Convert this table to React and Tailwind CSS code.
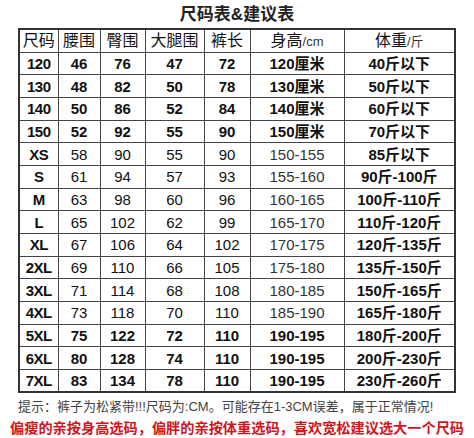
const rows = [
  ["120", "46", "76", "47", "72", "120厘米", "40斤以下", true, true],
  ["130", "48", "82", "50", "78", "130厘米", "50斤以下", true, true],
  ["140", "50", "86", "52", "84", "140厘米", "60斤以下", true, true],
  ["150", "52", "92", "55", "90", "150厘米", "70斤以下", true, true],
  ["XS", "58", "90", "55", "90", "150-155", "85斤以下", false, true],
  ["S", "61", "94", "57", "93", "155-160", "90斤-100斤", false, false],
  ["M", "63", "98", "60", "96", "160-165", "100斤-110斤", false, false],
  ["L", "65", "102", "62", "99", "165-170", "110斤-120斤", false, false],
  ["XL", "67", "106", "64", "102", "170-175", "120斤-135斤", false, false],
  ["2XL", "69", "110", "66", "105", "175-180", "135斤-150斤", false, false],
  ["3XL", "71", "114", "68", "108", "180-185", "150斤-165斤", false, false],
  ["4XL", "73", "118", "70", "110", "185-190", "165斤-180斤", false, false],
  ["5XL", "75", "122", "72", "110", "190-195", "180斤-200斤", true, true],
  ["6XL", "80", "128", "74", "110", "190-195", "200斤-230斤", true, true],
  ["7XL", "83", "134", "78", "110", "190-195", "230斤-260斤", true, true],
];

const widths = ["w-[39px]", "w-[42px]", "w-[45px]", "w-[59px]", "w-[46px]", "w-[94px]", "w-[111px]"];

const font = { fontFamily: '"Liberation Sans", "Noto Sans CJK SC", sans-serif' };

export default function App() {
  return (
    <div className="w-[474px] h-[438px] bg-white text-[#111] overflow-hidden" style={font}>
      <div className="h-[28px] flex items-center justify-center pt-[2px] text-[17px] font-bold text-[#222]">
        尺码表&amp;建议表
      </div>
      <table className="ml-[18px] w-[436px] table-fixed border-collapse border-2 border-[#333]">
        <colgroup>
          {widths.map((w, i) => (
            <col key={i} className={w} />
          ))}
        </colgroup>
        <thead>
          <tr className="h-[23px] text-[16px] leading-none">
            <th className="border border-[#444] font-normal">尺码</th>
            <th className="border border-[#444] font-normal">腰围</th>
            <th className="border border-[#444] font-normal">臀围</th>
            <th className="border border-[#444] font-normal">大腿围</th>
            <th className="border border-[#444] font-normal">裤长</th>
            <th className="border border-[#444] font-normal">
              身高<span className="text-[13px] text-[#333]">/cm</span>
            </th>
            <th className="border border-[#444] font-normal">
              体重<span className="text-[13px] text-[#333]">/斤</span>
            </th>
          </tr>
        </thead>
        <tbody>
          {rows.map((r) => (
            <tr key={r[0]} className="h-[22.7px] text-[15px] leading-none text-center">
              <td className="border border-[#444] font-bold tracking-[-0.5px]">{r[0]}</td>
              {r.slice(1, 5).map((v, i) => (
                <td key={i} className={`border border-[#444] ${r[7] ? "font-bold" : "font-normal"}`}>
                  {v}
                </td>
              ))}
              <td className={`border border-[#444] ${r[7] ? "font-bold" : "font-normal text-[#333]"}`}>{r[5]}</td>
              <td className="border border-[#444] font-bold">{r[6]}</td>
            </tr>
          ))}
        </tbody>
      </table>
      <div className="ml-[18px] mt-[5px] text-[13px] leading-[18px] text-[#444] whitespace-nowrap">
        提示：裤子为松紧带!!!尺码为:CM。可能存在1-3CM误差，属于正常情况!
      </div>
      <div className="ml-[10px] mt-[3px] text-[14.2px] leading-[18px] font-bold text-[#d2141c] whitespace-nowrap">
        偏瘦的亲按身高选码，偏胖的亲按体重选码，喜欢宽松建议选大一个尺码
      </div>
    </div>
  );
}
